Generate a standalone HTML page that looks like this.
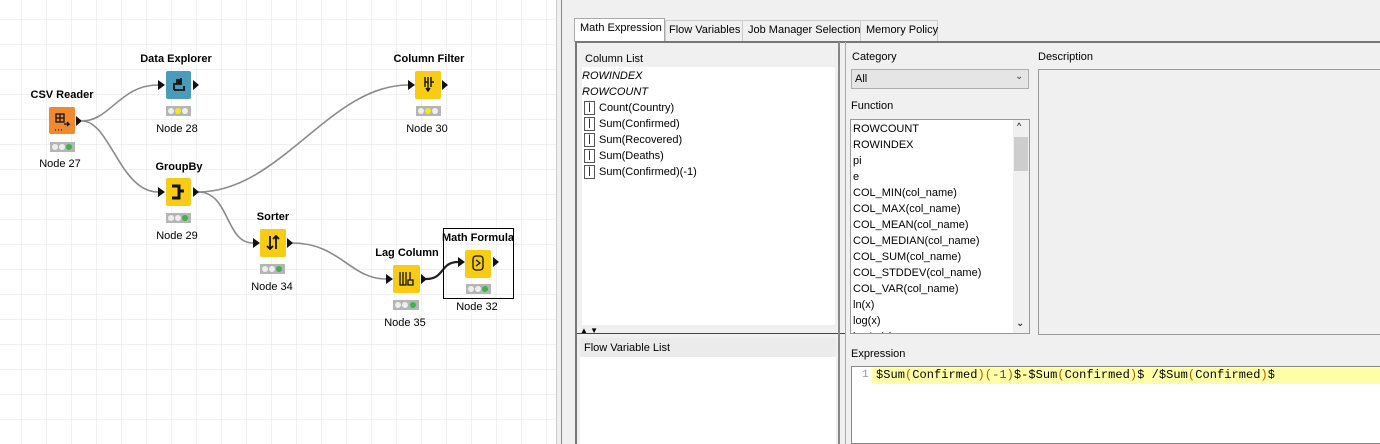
<!DOCTYPE html>
<html><head><meta charset="utf-8"><style>
*{margin:0;padding:0;box-sizing:border-box}
body{width:1380px;height:444px;overflow:hidden;position:relative;background:#f0f0f0;font-family:"Liberation Sans",sans-serif;font-size:11px;color:#000}
.a{position:absolute}
.t{position:absolute;white-space:nowrap;font-size:11px}
.fl div{height:16px;line-height:16px;padding-left:2px}
.cl div{height:16px;line-height:16px}
.ic{display:inline-block;width:11px;height:14px;border:1px solid #555;vertical-align:middle;margin:0 4px 0 2px;text-align:center;line-height:12px;font-size:10px}
</style></head><body>
<svg class="a" style="left:0;top:0" width="556" height="444">
<defs><pattern id="g" x="-3" y="-5" width="25" height="25" patternUnits="userSpaceOnUse"><path d="M25 0V25M0 25H25" stroke="#e3e3e3" stroke-width="1" fill="none"/></pattern></defs>
<rect width="556" height="444" fill="#fff"/><rect width="556" height="444" fill="url(#g)"/>
<g fill="none" stroke="#8a8a8a" stroke-width="1.6">
<path d="M82 121C110 121 120 85 158 85"/>
<path d="M82 121C110 121 120 192 158 192"/>
<path d="M198 192C280 192 330 85 408 85"/>
<path d="M198 192C230 192 225 243 253 243"/>
<path d="M292 243C340 243 350 279 386 279"/>
</g>
<path d="M426 279C445 279 440 262 458 262" fill="none" stroke="#222" stroke-width="2.2"/>
<g font-family="Liberation Sans,sans-serif" font-size="11" text-anchor="middle">
<text x="62" y="98" font-weight="bold">CSV Reader</text>
<text x="60" y="167">Node 27</text>
<text x="176" y="62" font-weight="bold">Data Explorer</text>
<text x="177" y="132">Node 28</text>
<text x="429" y="62" font-weight="bold">Column Filter</text>
<text x="427" y="132">Node 30</text>
<text x="179" y="170" font-weight="bold">GroupBy</text>
<text x="177" y="239">Node 29</text>
<text x="273" y="220" font-weight="bold">Sorter</text>
<text x="272" y="290">Node 34</text>
<text x="407" y="256" font-weight="bold">Lag Column</text>
<text x="405" y="326">Node 35</text>
<text x="478" y="241" font-weight="bold">Math Formula</text>
<text x="477" y="310">Node 32</text>
</g>
<rect x="443.5" y="228.5" width="70" height="70" fill="none" stroke="#000" stroke-width="1"/>
<g>
<rect x="49" y="107" width="26" height="27" rx="2" fill="#f18a2e"/>
<rect x="166" y="71" width="25" height="28" rx="2" fill="#4a9cbd"/>
<rect x="415" y="71" width="26" height="28" rx="2" fill="#f8cc14"/>
<rect x="166" y="178" width="25" height="28" rx="2" fill="#f8cc14"/>
<rect x="260" y="229" width="26" height="28" rx="2" fill="#f8cc14"/>
<rect x="393" y="265" width="27" height="28" rx="2" fill="#f8cc14"/>
<rect x="465" y="250" width="26" height="28" rx="2" fill="#f8cc14"/>
</g>
<g fill="#111">
<path d="M76 116l6 5-6 5z"/>
<path d="M158 80l7 5-7 5z M193 80l6 5-6 5z"/>
<path d="M408 80l7 5-7 5z M442 80l6 5-6 5z"/>
<path d="M158 187l7 5-7 5z M193 187l6 5-6 5z"/>
<path d="M253 238l7 5-7 5z M287 238l6 5-6 5z"/>
<path d="M386 274l7 5-7 5z M421 274l6 5-6 5z"/>
<path d="M458 257l7 5-7 5z M493 257l6 5-6 5z"/>
</g>
<g stroke="#111" fill="none" stroke-width="1.3">
<rect x="56" y="114" width="8" height="8"/><path d="M56 118h8M60 114v8M64 124h5l-2-2M69 124l-2 2"/>
<path d="M55 130h1M58 130h1M61 130h1"/>
<path d="M174 90v-6h3v-4h2v4h2v-6M174 90h10v-4" stroke-width="1.8"/>
<path d="M425 77v10M428 77v14M431 77v10M425 82h3M431 82h3M426 88l2 3 2-3" stroke-width="1.4"/>
<path d="M172 186h7v5h5M172 198h7v-6" stroke-width="3"/>
<path d="M270 236v13M267 246l3 3 3-3M276 249v-13M273 239l3-3 3 3" stroke-width="1.8"/>
<path d="M400 272v13h6v-13M403 272v13M410 272v8M408 280h5v5h-5z"/>
<rect x="473" y="256" width="10" height="14" rx="3"/><path d="M476 260l4 3-4 3"/>
</g>
<g>
<rect x="50" y="142" width="25" height="10" fill="#b5b5b5"/><circle cx="55" cy="147" r="3" fill="#eee"/><circle cx="62" cy="147" r="3" fill="#eee"/><circle cx="69" cy="147" r="3" fill="#3db34a"/>
<rect x="166" y="106" width="25" height="10" fill="#b5b5b5"/><circle cx="171" cy="111" r="3" fill="#eee"/><circle cx="178" cy="111" r="3" fill="#f3e81a"/><circle cx="185" cy="111" r="3" fill="#eee"/>
<rect x="416" y="106" width="25" height="10" fill="#b5b5b5"/><circle cx="421" cy="111" r="3" fill="#eee"/><circle cx="428" cy="111" r="3" fill="#f3e81a"/><circle cx="435" cy="111" r="3" fill="#eee"/>
<rect x="166" y="213" width="25" height="10" fill="#b5b5b5"/><circle cx="171" cy="218" r="3" fill="#eee"/><circle cx="178" cy="218" r="3" fill="#eee"/><circle cx="185" cy="218" r="3" fill="#3db34a"/>
<rect x="260" y="264" width="25" height="10" fill="#b5b5b5"/><circle cx="265" cy="269" r="3" fill="#eee"/><circle cx="272" cy="269" r="3" fill="#eee"/><circle cx="279" cy="269" r="3" fill="#3db34a"/>
<rect x="393" y="300" width="26" height="10" fill="#b5b5b5"/><circle cx="398" cy="305" r="3" fill="#eee"/><circle cx="405" cy="305" r="3" fill="#eee"/><circle cx="413" cy="305" r="3" fill="#3db34a"/>
<rect x="466" y="284" width="25" height="10" fill="#b5b5b5"/><circle cx="471" cy="289" r="3" fill="#eee"/><circle cx="478" cy="289" r="3" fill="#eee"/><circle cx="485" cy="289" r="3" fill="#3db34a"/>
</g>
</svg>
<div class="a" style="left:556px;top:0;width:6px;height:444px;background:#f0f0f0;border-left:1px solid #ccc;border-right:1px solid #888"></div>
<div class="a" style="left:574px;top:18px;width:91px;height:24px;background:#fff;border:1px solid #aaa;border-bottom:none"></div>
<div class="t" style="left:580px;top:22px">Math Expression</div>
<div class="a" style="left:665px;top:20px;width:273px;height:21px;border:1px solid #ccc;border-bottom:none"></div>
<div class="a" style="left:742px;top:20px;width:1px;height:21px;background:#ccc"></div>
<div class="a" style="left:860px;top:20px;width:1px;height:21px;background:#ccc"></div>
<div class="t" style="left:669px;top:24px">Flow Variables</div>
<div class="t" style="left:748px;top:24px">Job Manager Selection</div>
<div class="t" style="left:866px;top:24px">Memory Policy</div>
<div class="a" style="left:575px;top:41px;width:805px;height:403px;border-top:2px solid #777;border-left:2px solid #777"></div>
<div class="t" style="left:585px;top:53px">Column List</div>
<div class="a cl" style="left:582px;top:67px;width:253px;height:258px;background:#fff;padding-top:1px">
<div><i>ROWINDEX</i></div><div><i>ROWCOUNT</i></div>
<div><span class="ic">|</span>Count(Country)</div>
<div><span class="ic">|</span>Sum(Confirmed)</div>
<div><span class="ic">|</span>Sum(Recovered)</div>
<div><span class="ic">|</span>Sum(Deaths)</div>
<div><span class="ic">|</span>Sum(Confirmed)(-1)</div>
</div>
<div class="a" style="left:577px;top:333px;width:268px;height:1px;background:#444"></div>
<div class="t" style="left:580px;top:326px;font-size:8px">▲ ▼</div>
<div class="a" style="left:580px;top:338px;width:256px;height:19px;background:#ebebeb"></div>
<div class="t" style="left:584px;top:342px">Flow Variable List</div>
<div class="a" style="left:580px;top:357px;width:256px;height:87px;background:#fff"></div>
<div class="a" style="left:838px;top:42px;width:8px;height:402px;border-left:2px solid #888;border-right:1px solid #aaa"></div>
<div class="t" style="left:852px;top:51px">Category</div>
<div class="a" style="left:851px;top:69px;width:178px;height:20px;background:#e5e5e5;border:1px solid #adadad"></div>
<div class="t" style="left:855px;top:73px">All</div>
<div class="t" style="left:1015px;top:71px;font-size:10px;color:#444">&#8964;</div>
<div class="t" style="left:851px;top:100px">Function</div>
<div class="a fl" style="left:850px;top:119px;width:180px;height:215px;background:#fff;border:1px solid #999;overflow:hidden;padding-top:1px">
<div>ROWCOUNT</div><div>ROWINDEX</div><div>pi</div><div>e</div><div>COL_MIN(col_name)</div><div>COL_MAX(col_name)</div><div>COL_MEAN(col_name)</div><div>COL_MEDIAN(col_name)</div><div>COL_SUM(col_name)</div><div>COL_STDDEV(col_name)</div><div>COL_VAR(col_name)</div><div>ln(x)</div><div>log(x)</div><div>log1p(x)</div>
</div>
<div class="a" style="left:1013px;top:120px;width:16px;height:213px;background:#f0f0f0"></div>
<div class="a" style="left:1014px;top:137px;width:14px;height:34px;background:#cdcdcd"></div>
<div class="t" style="left:1017px;top:121px;font-size:9px">^</div>
<div class="t" style="left:1016px;top:318px;font-size:10px">&#8964;</div>
<div class="t" style="left:1038px;top:51px">Description</div>
<div class="a" style="left:1038px;top:69px;width:342px;height:266px;border:1px solid #999;border-right:none;background:#f0f0f0"></div>
<div class="t" style="left:851px;top:348px">Expression</div>
<div class="a" style="left:851px;top:366px;width:529px;height:78px;background:#fff;border:1px solid #888;border-right:none"></div>
<div class="a" style="left:872px;top:367px;width:508px;height:17px;background:#ffffa8"></div>
<div class="t" style="left:862px;top:369px;color:#999;font-family:'Liberation Mono',monospace;font-size:11px">1</div>
<div class="t" style="left:876px;top:368px;font-family:'Liberation Mono',monospace;font-size:12px;letter-spacing:0.05px">$Sum<span style="color:#b35900">(</span>Confirmed<span style="color:#b35900">)(</span><span style="color:#7030a0">-1</span><span style="color:#b35900">)</span>$-$Sum<span style="color:#b35900">(</span>Confirmed<span style="color:#b35900">)</span>$ /$Sum<span style="color:#b35900">(</span>Confirmed<span style="color:#b35900">)</span>$</div>
</body></html>
